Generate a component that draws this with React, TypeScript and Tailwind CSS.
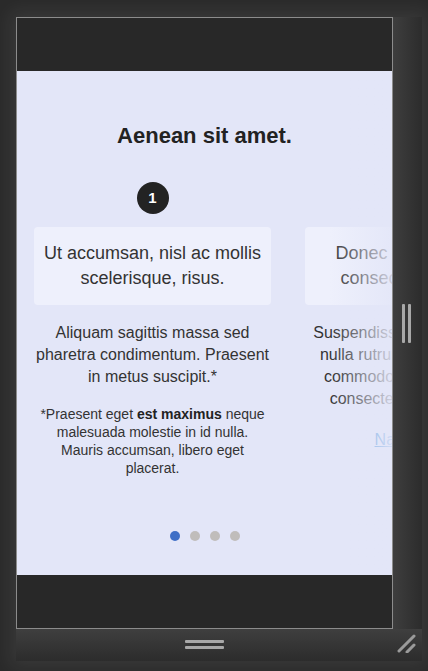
import React from "react";

const font = { fontFamily: '"Liberation Sans", Arial, sans-serif' };

function SlideOne() {
  return (
    <div className="flex w-[237px] shrink-0 flex-col items-center text-center">
      <div className="mt-[32px] flex h-[32px] w-[32px] items-center justify-center rounded-full bg-[#232323] text-[15px] font-bold text-white">
        1
      </div>
      <div className="mt-[13px] w-full rounded-[4px] bg-[#eef0fc] px-[6px] py-[14px] text-[18px] leading-[25px] text-[#333]">
        Ut accumsan, nisl ac mollis scelerisque, risus.
      </div>
      <p className="mt-[17px] text-[16px] leading-[22px] text-[#333]">
        Aliquam sagittis massa sed pharetra condimentum. Praesent in metus suscipit.*
      </p>
      <p className="mt-[17px] text-[14px] leading-[18px] text-[#333]">
        *Praesent eget <b className="font-bold text-[#222]">est maximus</b> neque malesuada
        molestie in id nulla. Mauris accumsan, libero eget placerat.
      </p>
    </div>
  );
}

function SlideTwo() {
  return (
    <div className="flex w-[237px] shrink-0 flex-col items-center text-center">
      <div className="mt-[32px] h-[32px] w-[32px]" />
      <div className="mt-[13px] w-full rounded-[4px] bg-[#eef0fc] px-[6px] py-[14px] text-[18px] leading-[25px] text-[#333]">
        Donec maximus tellus consectetur aliquam.
      </div>
      <p className="mt-[17px] text-[16px] leading-[22px] text-[#333]">
        Suspendisse potenti. Integer et nulla rutrum, vitae dictum nisi commodo sed lacinia
        quam, consectetur adipiscing elit.
      </p>
      <a className="mt-[19px] text-[16px] leading-[22px] text-[#4a90d9] underline">
        Nam tincidunt
      </a>
    </div>
  );
}

export default function App() {
  return (
    <div
      className="relative h-[671px] w-[428px] overflow-hidden bg-[#2a2a2a] pl-[16px] pt-[17px]"
      style={font}
    >
      <div className="flex w-[406px] flex-col bg-[#313131] shadow-[0_0_18px_6px_rgba(255,255,255,0.07)]">
        <div className="flex">
          <div className="flex h-[612px] w-[377px] flex-col border border-[#8c8c8c] bg-[#282828]">
            <div className="h-[53px] bg-[#282828]" />
            <div className="relative h-[504px] overflow-hidden bg-[#e3e6f8]">
              <h2 className="pt-[51px] text-center text-[22px] font-bold leading-[28px] text-[#222]">
                Aenean sit amet.
              </h2>
              <div className="flex gap-[34px] pl-[17px]">
                <SlideOne />
                <SlideTwo />
              </div>
              <div className="pointer-events-none absolute bottom-0 right-0 top-0 w-[62px] bg-gradient-to-r from-[#e3e6f800] to-[#e3e6f8e0]" />
              <div className="absolute left-0 right-0 top-[460px] flex justify-center gap-[10px] pl-[1px]">
                <span className="h-[10px] w-[10px] rounded-full bg-[#3f6fc6]" />
                <span className="h-[10px] w-[10px] rounded-full bg-[#c0bdbb]" />
                <span className="h-[10px] w-[10px] rounded-full bg-[#c0bdbb]" />
                <span className="h-[10px] w-[10px] rounded-full bg-[#c0bdbb]" />
              </div>
            </div>
            <div className="h-[53px] bg-[#282828]" />
          </div>
          <div className="flex w-[29px] items-center bg-gradient-to-r from-[#3e3e3e] via-[#353535] to-[#2c2c2c] pl-[9px]">
            <div className="flex gap-[3px]">
              <span className="h-[39px] w-[3px] rounded-[1px] bg-[#a8a8a8]" />
              <span className="h-[39px] w-[3px] rounded-[1px] bg-[#a8a8a8]" />
            </div>
          </div>
        </div>
        <div className="flex h-[32px] bg-gradient-to-b from-[#3f3f3f] to-[#2c2c2c]">
          <div className="flex w-[377px] justify-center pt-[11px]">
            <div className="flex flex-col gap-[3px] pr-[1px]">
              <span className="h-[3px] w-[39px] rounded-[1px] bg-[#a8a8a8]" />
              <span className="h-[3px] w-[39px] rounded-[1px] bg-[#a8a8a8]" />
            </div>
          </div>
          <div className="flex w-[29px] pl-[3px] pt-[4px]">
            <svg width="20" height="20" viewBox="0 0 20 20">
              <line x1="3" y1="18" x2="18" y2="3" stroke="#9a9a9a" strokeWidth="3" strokeLinecap="round" />
              <line x1="11" y1="19" x2="18" y2="12" stroke="#9a9a9a" strokeWidth="3" strokeLinecap="round" />
            </svg>
          </div>
        </div>
      </div>
    </div>
  );
}
